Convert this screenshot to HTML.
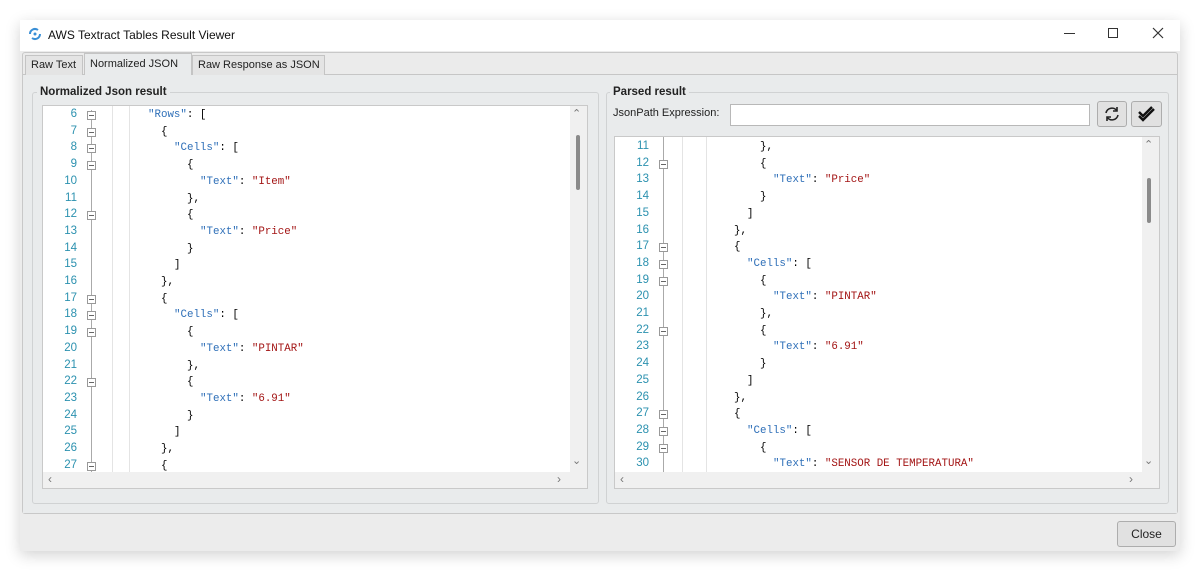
<!DOCTYPE html>
<html><head><meta charset="utf-8"><style>
*{box-sizing:border-box;margin:0;padding:0}
body{width:1200px;height:570px;background:#fff;position:relative;overflow:hidden;font-family:"Liberation Sans",sans-serif;font-size:12px;color:#222}
.abs{position:absolute;white-space:nowrap}
.win{left:20px;top:20px;width:1160px;height:531px;background:#ececec;box-shadow:0 4px 14px rgba(0,0,0,.18)}
.title{left:20px;top:20px;width:1160px;height:31px;background:#fff}
.tabframe{left:22px;top:52px;width:1156px;height:462px;border:1px solid #c8c8c8;border-radius:3px;background:#ebebeb}
.content{left:23px;top:74px;width:1154px;height:439px;background:#e9ebec;border-top:1px solid #c6c6c6}
.tab{top:55px;height:20px;border:1px solid #c4c4c4;border-bottom:none;background:#e4e4e4;font-size:11px;line-height:19px;padding:0 5px;color:#222;overflow:hidden}
.tab.sel{top:53px;height:22px;background:#e9ebec;line-height:21px}
.group{border:1px solid #d0d2d3;border-radius:3px}
.glabel{font-weight:bold;font-size:11.5px;background:#e9ebec;padding:0 3px;color:#222}
.ed{background:#fff;border:1px solid #c9c9c9;overflow:hidden}
.ln{position:absolute;font-family:"Liberation Sans",sans-serif;font-size:11.5px;color:#2b91af;text-align:right;width:30px}
.cd{position:absolute;font-family:"Liberation Mono",monospace;font-size:10.8px;white-space:pre;color:#000}
.k{color:#2e6fb8}.s{color:#a31515}
.fb{position:absolute;width:9px;height:9px;border:1px solid #999;background:#fff}
.fb:after{content:"";position:absolute;left:1px;top:3px;width:5px;height:1px;background:#666}
.vl{position:absolute;width:1px;background:#bbb}
.hs{position:absolute;height:16px;background:#f0f0f0}
.vs{position:absolute;width:17px;background:#f0f0f0}
.btn{border:1px solid #adadad;border-radius:3px;background:#e1e1e1}
</style></head><body>
<div class="abs win"></div>
<div class="abs title"></div>
<svg class="abs" style="left:27px;top:26px" width="16" height="16" viewBox="0 0 16 16"><path d="M3 8a5 5 0 0 1 8-4" stroke="#3a8fd6" stroke-width="2" fill="none"/><path d="M13 8a5 5 0 0 1-8 4" stroke="#3a8fd6" stroke-width="2" fill="none"/><circle cx="8" cy="8" r="1.5" fill="#3a8fd6"/></svg>
<div class="abs" style="left:48px;top:28px;font-size:12px;color:#111">AWS Textract Tables Result Viewer</div>
<div class="abs" style="left:1064px;top:33px;width:11px;height:1px;background:#333"></div>
<div class="abs" style="left:1108px;top:28px;width:10px;height:10px;border:1px solid #333"></div>
<svg class="abs" style="left:1152px;top:27px" width="12" height="12"><path d="M1 1L11 11M11 1L1 11" stroke="#333" stroke-width="1.2"/></svg>

<div class="abs tabframe"></div>
<div class="abs content"></div>
<div class="abs tab" style="left:25px;width:58px">Raw Text</div>
<div class="abs tab sel" style="left:84px;width:108px">Normalized JSON</div>
<div class="abs tab" style="left:192px;width:133px">Raw Response as JSON</div>

<!-- left group -->
<div class="abs group" style="left:32px;top:92px;width:567px;height:412px"></div>
<div class="abs glabel" style="left:37px;top:86px">Normalized Json result</div>
<div class="abs ed" style="left:42px;top:105px;width:546px;height:384px"></div>
<div class="vl" style="left:112px;top:106px;height:366px;background:#e4e4e4"></div>
<div class="vl" style="left:129px;top:106px;height:366px;background:#e4e4e4"></div>
<div class="vl" style="left:91px;top:110px;height:362px;background:#aaa"></div>
<div class="hs" style="left:43px;top:472px;width:527px"></div>
<div class="vs" style="left:570px;top:106px;height:382px"></div>
<div class="abs" style="left:576px;top:135px;width:4px;height:55px;background:#8a8a8a;border-radius:2px"></div>
<div class="abs" style="left:572px;top:107px;color:#777;font-size:11px">&#8963;</div>
<div class="abs" style="left:572px;top:454px;color:#777;font-size:11px">&#8964;</div>
<div class="abs" style="left:48px;top:472px;color:#777;font-size:12px">&lsaquo;</div>
<div class="abs" style="left:557px;top:472px;color:#777;font-size:12px">&rsaquo;</div>

<!-- right group -->
<div class="abs group" style="left:606px;top:92px;width:563px;height:412px"></div>
<div class="abs glabel" style="left:610px;top:86px">Parsed result</div>
<div class="abs" style="left:613px;top:107px;font-size:11px">JsonPath Expression:</div>
<div class="abs" style="left:730px;top:104px;width:360px;height:22px;background:#fff;border:1px solid #b8b8b8"></div>
<div class="abs btn" style="left:1097px;top:101px;width:30px;height:26px"></div>
<svg class="abs" style="left:1102px;top:104px" width="20" height="20" viewBox="0 0 20 20"><path d="M4 9a6 6 0 0 1 11-2M16 11a6 6 0 0 1-11 2" stroke="#222" stroke-width="1.6" fill="none"/><path d="M15 3v4h-4M5 17v-4h4" stroke="#222" stroke-width="1.6" fill="none"/></svg>
<div class="abs btn" style="left:1131px;top:101px;width:31px;height:26px"></div>
<svg class="abs" style="left:1137px;top:105px" width="20" height="18" viewBox="0 0 20 18"><path d="M2 7l4 4 9-9M2 11l4 4 11-11" stroke="#111" stroke-width="2.4" fill="none"/></svg>
<div class="abs ed" style="left:614px;top:136px;width:546px;height:353px"></div>
<div class="vl" style="left:682px;top:137px;height:335px;background:#e4e4e4"></div>
<div class="vl" style="left:706px;top:137px;height:335px;background:#e4e4e4"></div>
<div class="vl" style="left:663px;top:137px;height:335px;background:#aaa"></div>
<div class="hs" style="left:615px;top:472px;width:527px"></div>
<div class="vs" style="left:1142px;top:137px;height:351px"></div>
<div class="abs" style="left:1147px;top:178px;width:4px;height:45px;background:#8a8a8a;border-radius:2px"></div>
<div class="abs" style="left:1144px;top:138px;color:#777;font-size:11px">&#8963;</div>
<div class="abs" style="left:1144px;top:454px;color:#777;font-size:11px">&#8964;</div>
<div class="abs" style="left:620px;top:472px;color:#777;font-size:12px">&lsaquo;</div>
<div class="abs" style="left:1129px;top:472px;color:#777;font-size:12px">&rsaquo;</div>

<div id="L"></div><div id="R"></div>

<div class="abs btn" style="left:1117px;top:521px;width:59px;height:26px;font-size:12px;text-align:center;line-height:24px">Close</div>

<script>
function q(t){return t.replace(/"([A-Za-z]+)":/g,'<span class="k">"$1"</span>:').replace(/: "([^"]*)"/g,': <span class="s">"$1"</span>');}
function build(id,lines,start,top,lnX,fbX){
 var h='';
 lines.forEach(function(l,i){
  var y=top+i*16.7;
  h+='<div class="ln" style="left:'+lnX+'px;top:'+(y-7)+'px">'+(start+i)+'</div>';
  if(l[2])h+='<div class="fb" style="left:'+fbX+'px;top:'+(y-4)+'px"></div>';
  h+='<div class="cd" style="left:'+l[0]+'px;top:'+(y-6)+'px">'+q(l[1])+'</div>';
 });
 document.getElementById(id).innerHTML=h;
}
build('L',[
[148,'"Rows": [',1],[161,'{',1],[174,'"Cells": [',1],[187,'{',1],[200,'"Text": "Item"'],[187,'},'],[187,'{',1],[200,'"Text": "Price"'],[187,'}'],[174,']'],[161,'},'],[161,'{',1],[174,'"Cells": [',1],[187,'{',1],[200,'"Text": "PINTAR"'],[187,'},'],[187,'{',1],[200,'"Text": "6.91"'],[187,'}'],[174,']'],[161,'},'],[161,'{',1]
],6,115,47,87);
build('R',[
[760,'},'],[760,'{',1],[773,'"Text": "Price"'],[760,'}'],[747,']'],[734,'},'],[734,'{',1],[747,'"Cells": [',1],[760,'{',1],[773,'"Text": "PINTAR"'],[760,'},'],[760,'{',1],[773,'"Text": "6.91"'],[760,'}'],[747,']'],[734,'},'],[734,'{',1],[747,'"Cells": [',1],[760,'{',1],[773,'"Text": "SENSOR DE TEMPERATURA"']
],11,147,619,659);
</script>
</body></html>
